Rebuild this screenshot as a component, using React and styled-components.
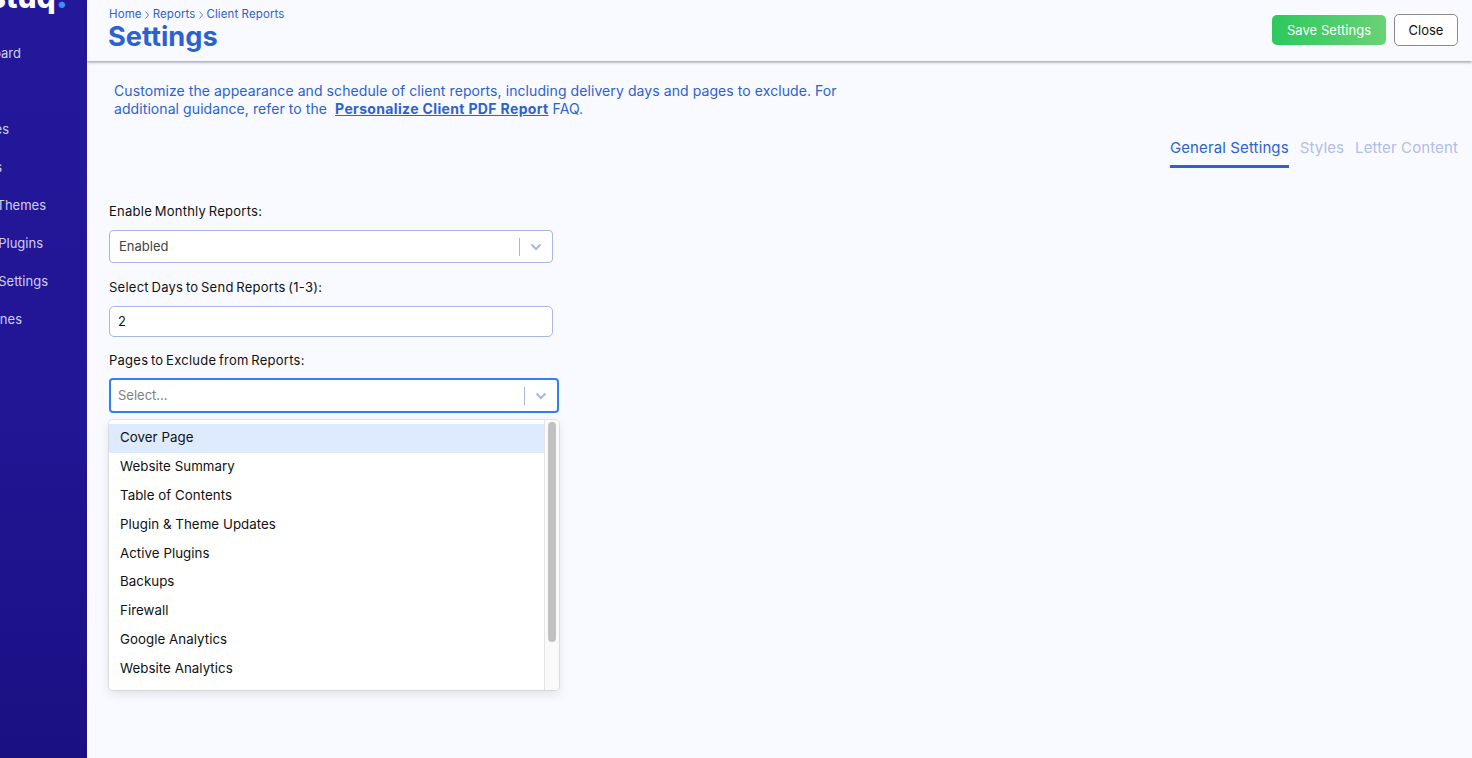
import React from 'react';
import styled, { createGlobalStyle } from 'styled-components';

const font = `'Inter', 'Noto Sans', sans-serif`;

const GlobalStyle = createGlobalStyle`
  html, body {
    margin: 0;
    padding: 0;
    height: 100%;
    overflow: hidden;
    background: #f9faff;
    font-family: ${font};
  }
  * {
    box-sizing: border-box;
  }
`;

const Page = styled.div`
  display: flex;
  width: 1472px;
  height: 758px;
  overflow: hidden;
`;

const Sidebar = styled.aside`
  width: 87px;
  flex-shrink: 0;
  height: 100%;
  overflow: hidden;
  background: linear-gradient(180deg, #22189a 0%, #221696 50%, #1a1082 100%);
`;

const Logo = styled.div`
  height: 12px;
  display: flex;
  justify-content: flex-end;
  padding-right: 19px;
  align-items: flex-end;
`;

const LogoText = styled.span`
  font-size: 30px;
  line-height: 30px;
  font-weight: 800;
  color: #fff;
  white-space: nowrap;

  b {
    font-size: 35px;
    line-height: 30px;
    color: #3a8cff;
    font-weight: 800;
  }
`;

const NavList = styled.nav`
  display: flex;
  flex-direction: column;
  padding-top: 22px;
`;

const NavItem = styled.a`
  height: 38px;
  display: flex;
  align-items: center;
  justify-content: flex-end;
  padding-right: ${p => p.$right}px;
  font-size: 13px;
  white-space: nowrap;
  color: #d0cfee;
`;

const Main = styled.main`
  flex: 1;
  display: flex;
  flex-direction: column;
  min-width: 0;
`;

const Header = styled.header`
  height: 61px;
  display: flex;
  align-items: flex-start;
  justify-content: space-between;
  padding: 8px 14px 0 22px;
  background: #f9faff;
  box-shadow: 0 1px 3px rgba(30, 30, 50, 0.5);
`;

const Crumbs = styled.div`
  display: flex;
  align-items: center;
  gap: 2.5px;
  font-size: 11.5px;
  line-height: 13px;
  letter-spacing: 0.1px;
  color: #2d62cc;
`;

const Title = styled.h1`
  margin: 1px 0 0 -1px;
  font-size: 27.2px;
  line-height: 30px;
  font-weight: 700;
  color: #2d62cc;
`;

const Actions = styled.div`
  display: flex;
  gap: 8px;
  padding-top: 7px;
`;

const SaveButton = styled.button`
  width: 114px;
  height: 30px;
  border: 0;
  border-radius: 5px;
  background: linear-gradient(90deg, #2dc95d 0%, #69d277 100%);
  color: #fff;
  font-family: ${font};
  font-size: 13px;
  letter-spacing: 0.05px;
`;

const CloseButton = styled.button`
  width: 64px;
  height: 32px;
  margin-top: -1px;
  border: 1px solid #8a8a8a;
  border-radius: 5px;
  background: #fff;
  color: #111;
  font-family: ${font};
  font-size: 13px;
`;

const Content = styled.div`
  flex: 1;
  padding: 0 14px 0 22px;
`;

const Intro = styled.p`
  width: 760px;
  margin: 21px 0 0 5px;
  font-size: 14px;
  line-height: 18px;
  letter-spacing: 0.08px;
  color: #2d62cc;

  a {
    margin-left: 4px;
    font-weight: 700;
    letter-spacing: 0.35px;
    text-decoration: underline;
    color: #2d62cc;
  }
`;

const Tabs = styled.div`
  display: flex;
  justify-content: flex-end;
  gap: 11px;
  margin-top: 20px;
`;

const Tab = styled.div`
  height: 30px;
  padding-top: 1px;
  font-size: 15px;
  line-height: 18px;
  letter-spacing: 0.12px;
  color: ${p => (p.$active ? '#2d62cc' : '#b1bdea')};
  border-bottom: 3px solid ${p => (p.$active ? '#2d62cc' : 'transparent')};
`;

const Form = styled.div`
  display: flex;
  flex-direction: column;
  margin-top: 36px;
`;

const Label = styled.label`
  font-size: 13px;
  line-height: 14px;
  letter-spacing: 0.25px;
  word-spacing: -1.2px;
  color: #111;
  margin-bottom: ${p => p.$gap}px;
`;

const SelectBox = styled.div`
  display: flex;
  align-items: center;
  width: ${p => (p.$focused ? 450 : 444)}px;
  height: ${p => (p.$focused ? 35 : 33)}px;
  margin-bottom: ${p => (p.$focused ? 16 : 17)}px;
  padding-left: ${p => (p.$focused ? 7 : 9)}px;
  border: ${p => (p.$focused ? '2px solid #2f80f5' : '1px solid #a9b6e2')};
  border-radius: 4px;
  background: #fff;
  font-size: 13px;
  color: ${p => (p.$focused ? '#808080' : '#444')};
`;

const SelectValue = styled.span`
  flex: 1;
  margin-bottom: 2px;
`;

const Separator = styled.span`
  width: 1px;
  height: 18px;
  background: #a9b6e2;
`;

const Chevron = styled.span`
  width: 32px;
  display: flex;
  justify-content: center;
  color: #a9b6e2;
`;

const TextInput = styled.input`
  width: 444px;
  height: 31px;
  margin-bottom: 16px;
  padding: 0 8px 2px;
  border: 1px solid #a9b6e2;
  border-radius: 5px;
  background: #fff;
  font-family: ${font};
  font-size: 13px;
  color: #111;
  outline: none;
`;

const Menu = styled.div`
  display: flex;
  width: 450px;
  height: 270px;
  margin-top: -9px;
  border-radius: 4px;
  background: #fff;
  box-shadow: 0 0 0 1px rgba(0, 0, 0, 0.08), 0 4px 11px rgba(0, 0, 0, 0.1);
  overflow: hidden;
`;

const Options = styled.div`
  flex: 1;
  padding-top: 4px;
`;

const Option = styled.div`
  height: 28.8px;
  padding: 0 0 2px 11px;
  display: flex;
  align-items: center;
  font-size: 13.3px;
  letter-spacing: 0.05px;
  color: #111;
  background: ${p => (p.$active ? '#deebff' : 'transparent')};
`;

const Track = styled.div`
  width: 15px;
  background: #fafafa;
  border-left: 1px solid #e4e4e4;
  padding: 2px 3px 0 3px;
`;

const Thumb = styled.div`
  height: 220px;
  border-radius: 4px;
  background: #c1c1c1;
`;

const ChevronIcon = () => (
  <svg width="12" height="8" viewBox="0 0 12 8" fill="none">
    <path d="M1.5 1.5 L6 6 L10.5 1.5" stroke="currentColor" strokeWidth="2" />
  </svg>
);

const CrumbSep = () => (
  <svg width="6" height="8" viewBox="0 0 6 8" fill="none">
    <path d="M1.5 0.5 L4.5 4 L1.5 7.5" stroke="#2d62cc" strokeWidth="0.8" />
  </svg>
);

const navItems = [
  { label: 'Dashboard', right: 66 },
  { label: 'Reports', right: 88 },
  { label: 'Websites', right: 78 },
  { label: 'Clients', right: 85 },
  { label: 'Update Themes', right: 41 },
  { label: 'Update Plugins', right: 44 },
  { label: 'Update Settings', right: 39 },
  { label: 'Timelines', right: 65 },
];

const pages = [
  'Cover Page',
  'Website Summary',
  'Table of Contents',
  'Plugin & Theme Updates',
  'Active Plugins',
  'Backups',
  'Firewall',
  'Google Analytics',
  'Website Analytics',
];

export default function App() {
  return (
    <Page>
      <GlobalStyle />
      <Sidebar>
        <Logo>
          <LogoText>Hostuq<b>.</b></LogoText>
        </Logo>
        <NavList>
          {navItems.map(item => (
            <NavItem key={item.label} $right={item.right}>{item.label}</NavItem>
          ))}
        </NavList>
      </Sidebar>
      <Main>
        <Header>
          <div>
            <Crumbs>
              Home <CrumbSep /> Reports <CrumbSep /> Client Reports
            </Crumbs>
            <Title>Settings</Title>
          </div>
          <Actions>
            <SaveButton>Save Settings</SaveButton>
            <CloseButton>Close</CloseButton>
          </Actions>
        </Header>
        <Content>
          <Intro>
            Customize the appearance and schedule of client reports, including delivery days and pages to exclude. For
            additional guidance, refer to the <a href="#faq">Personalize Client PDF Report</a> FAQ.
          </Intro>
          <Tabs>
            <Tab $active>General Settings</Tab>
            <Tab>Styles</Tab>
            <Tab>Letter Content</Tab>
          </Tabs>
          <Form>
            <Label $gap={12}>Enable Monthly Reports:</Label>
            <SelectBox>
              <SelectValue>Enabled</SelectValue>
              <Separator />
              <Chevron><ChevronIcon /></Chevron>
            </SelectBox>
            <Label $gap={12}>Select Days to Send Reports (1-3):</Label>
            <TextInput defaultValue="2" />
            <Label $gap={11}>Pages to Exclude from Reports:</Label>
            <SelectBox $focused>
              <SelectValue>Select...</SelectValue>
              <Separator />
              <Chevron><ChevronIcon /></Chevron>
            </SelectBox>
            <Menu>
              <Options>
                {pages.map((page, i) => (
                  <Option key={page} $active={i === 0}>{page}</Option>
                ))}
              </Options>
              <Track><Thumb /></Track>
            </Menu>
          </Form>
        </Content>
      </Main>
    </Page>
  );
}
